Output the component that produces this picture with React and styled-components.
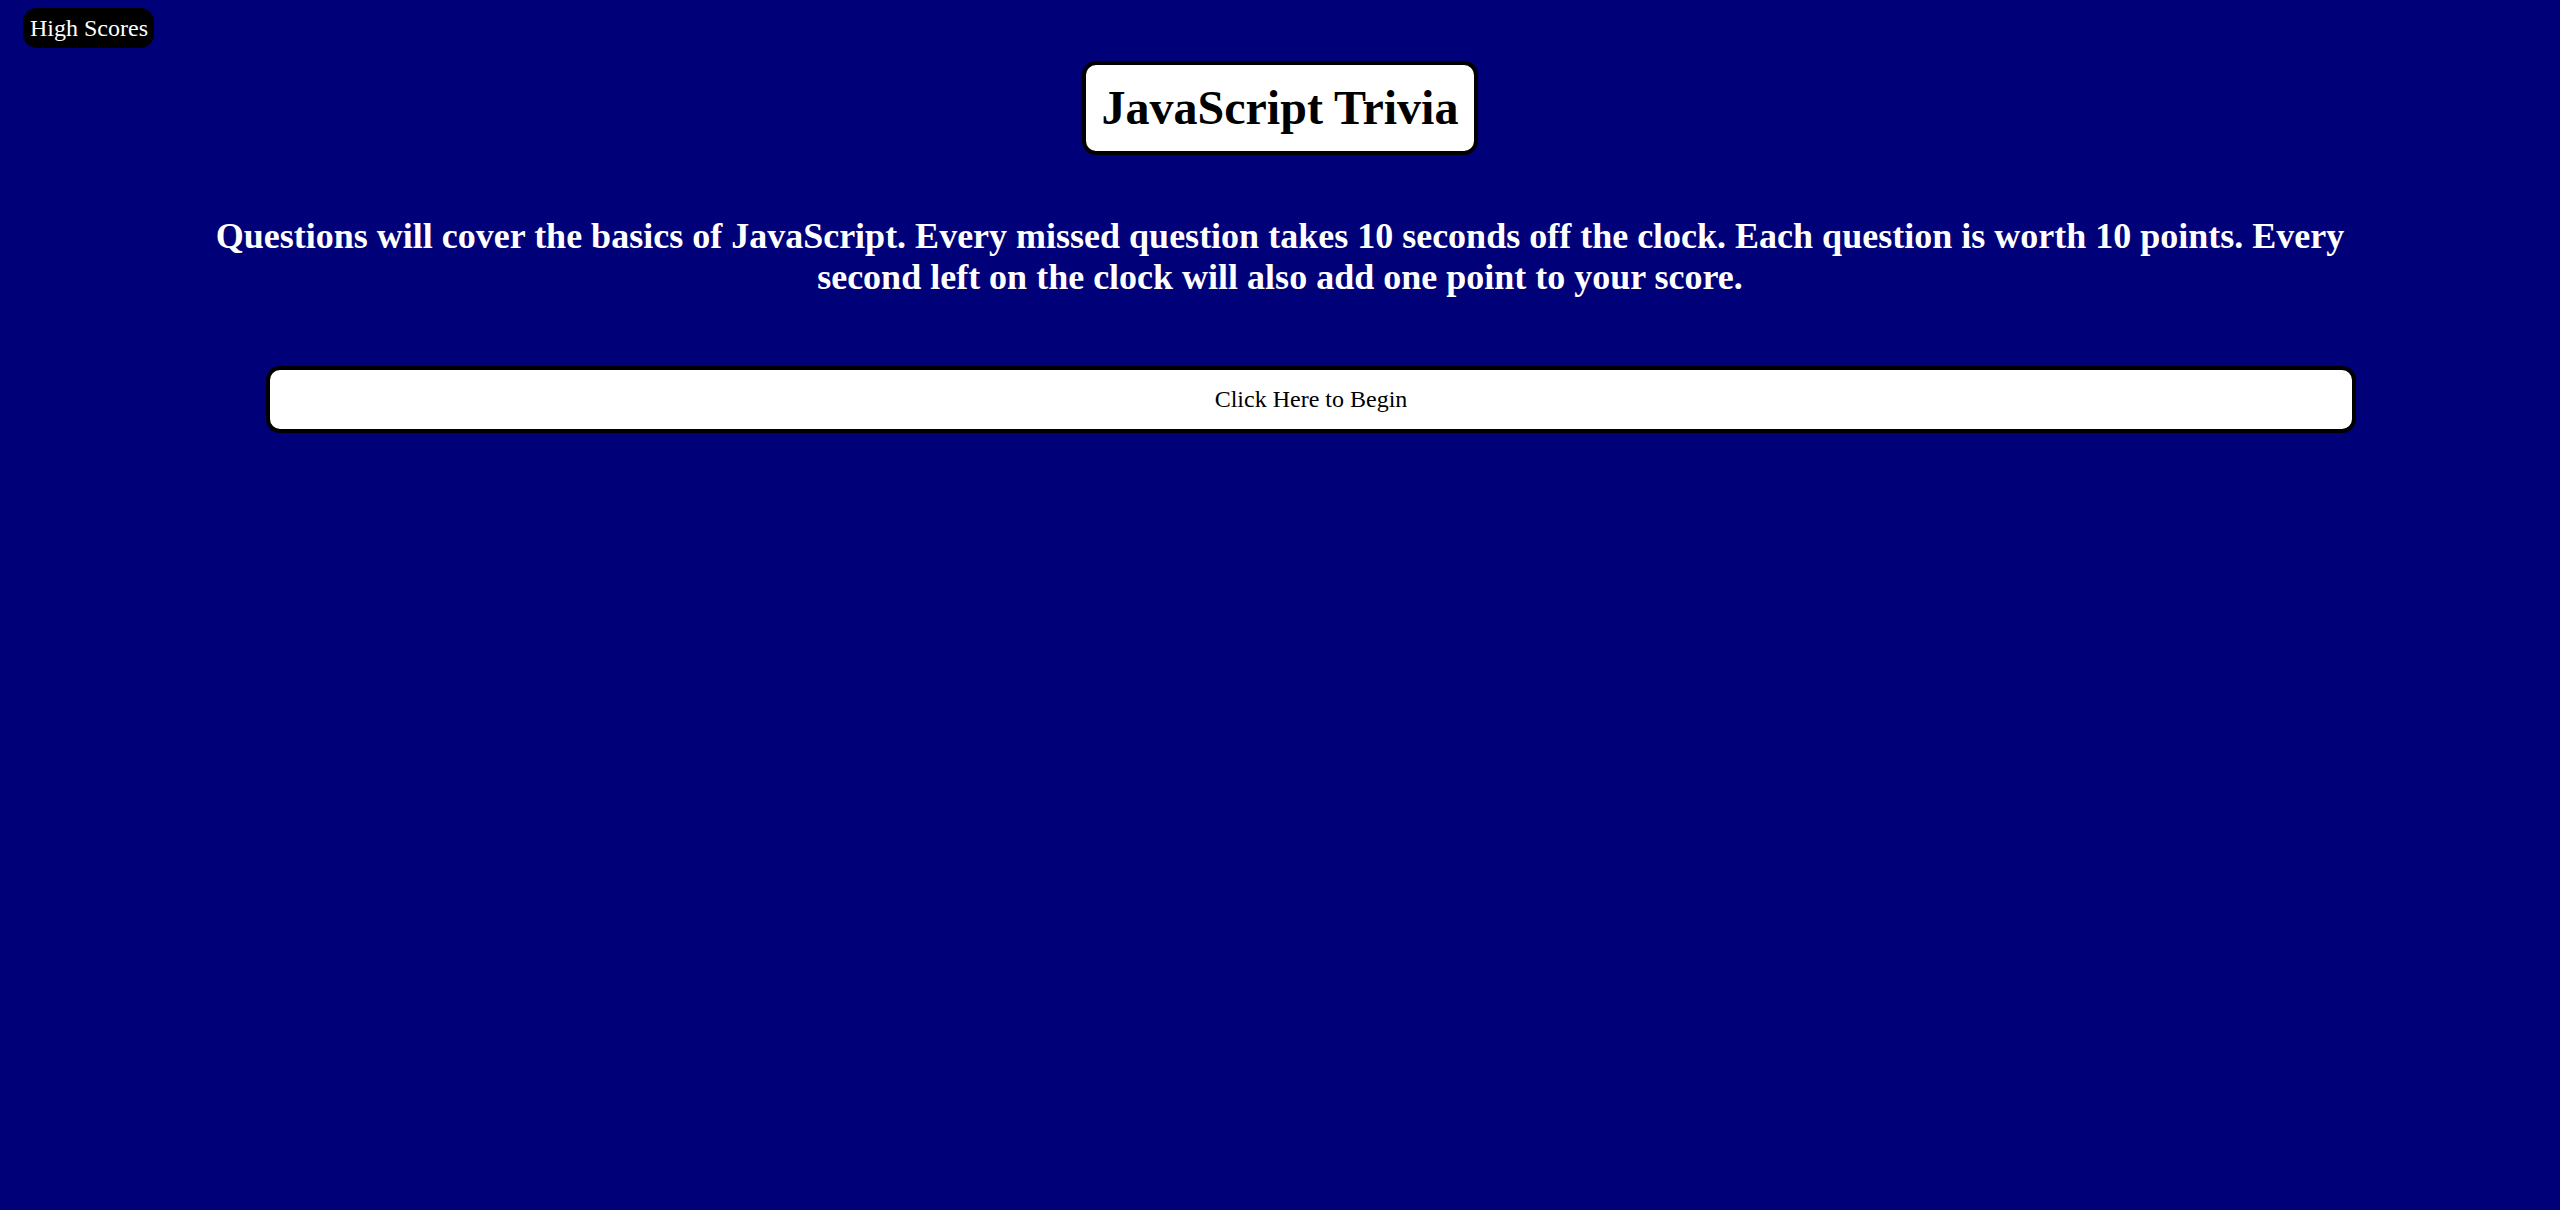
import React from "react"
import styled, { createGlobalStyle } from "styled-components"

const GlobalStyle = createGlobalStyle`
  html, body {
    margin: 0;
    padding: 0;
    background: #000078;
  }

  body {
    font-family: "Liberation Serif", "Times New Roman", serif;
  }
`

const Page = styled.div`
  min-height: 100vh;
  background: #000078;
  padding-top: 8px;
  box-sizing: border-box;
`

const TopBar = styled.nav`
  display: flex;
  padding-left: 23px;
`

const ScoresButton = styled.button`
  height: 40px;
  padding: 0 6px 0 7px;
  border: none;
  border-radius: 14px;
  background: #000;
  color: #fff;
  font-family: inherit;
  font-size: 24px;
  cursor: pointer;
`

const TitleRow = styled.header`
  display: flex;
  justify-content: center;
  margin-top: 13px;
`

const Title = styled.h1`
  margin: 0;
  padding: 15px 16px 16px;
  border: 4px solid #000;
  border-radius: 14px;
  background: #fff;
  color: #000;
  font-size: 48px;
  font-weight: bold;
  line-height: normal;
`

const Intro = styled.h2`
  width: 85%;
  margin: 61px auto 0;
  color: #fff;
  font-size: 36px;
  font-weight: bold;
  line-height: 41px;
  text-align: center;
`

const StartButton = styled.button`
  display: block;
  box-sizing: border-box;
  width: 2090px;
  height: 67px;
  margin: 68px 0 0 266px;
  padding: 0 15px;
  border: 4px solid #000;
  border-radius: 14px;
  background: #fff;
  color: #000;
  font-family: inherit;
  font-size: 24px;
  cursor: pointer;
`

const App = () => (
  <Page>
    <GlobalStyle />
    <TopBar>
      <ScoresButton>High Scores</ScoresButton>
    </TopBar>
    <TitleRow>
      <Title>JavaScript Trivia</Title>
    </TitleRow>
    <Intro>
      Questions will cover the basics of JavaScript. Every missed question
      takes 10 seconds off the clock. Each question is worth 10 points. Every
      second left on the clock will also add one point to your score.
    </Intro>
    <StartButton>Click Here to Begin</StartButton>
  </Page>
)

export default App
